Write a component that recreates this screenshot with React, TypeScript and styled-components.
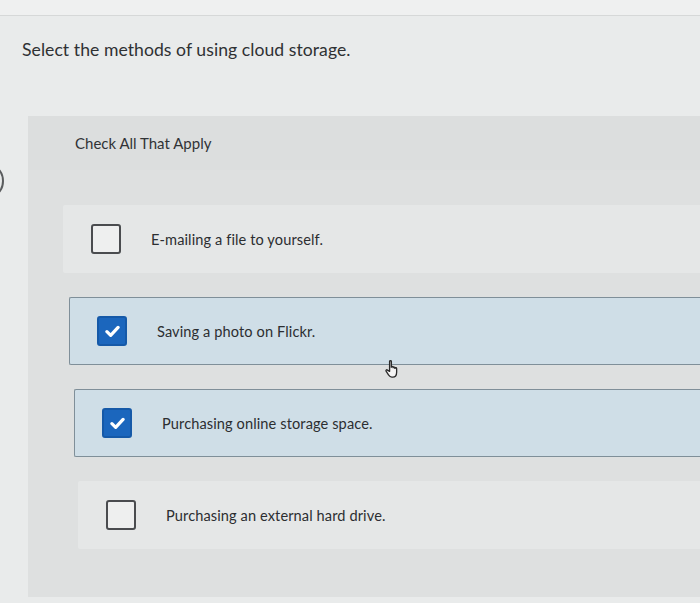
import React from "react";
import styled, { createGlobalStyle } from "styled-components";

const Global = createGlobalStyle`
  html, body { margin: 0; padding: 0; }
  body {
    background: #e9ebeb;
    font-family: Lato, "Open Sans", "Liberation Sans", sans-serif;
    color: #2e3032;
    overflow: hidden;
  }
`;

const Page = styled.div`
  position: relative;
  width: 700px;
  height: 603px;
  overflow: hidden;
  display: flex;
  flex-direction: column;
  background: #e9ebeb;
`;

const TopBar = styled.div`
  height: 15px;
  flex: none;
  background: #eff0f0;
  border-bottom: 1px solid #d6d8d8;
`;

const Title = styled.h1`
  margin: 24px 0 0 22px;
  font-size: 17.6px;
  font-weight: 400;
  line-height: 20px;
  color: #2f3133;
  letter-spacing: 0.05px;
`;

const Panel = styled.section`
  margin: 56px 0 0 28px;
  height: 481px;
  flex: none;
  background: #dee0e0;
  display: flex;
  flex-direction: column;
`;

const PanelHeader = styled.div`
  height: 54px;
  display: flex;
  align-items: center;
  padding-left: 47px;
  font-size: 15px;
  color: #313336;
  background: #dcdede;
`;

const List = styled.ul`
  list-style: none;
  margin: 35px 0 0 0;
  padding: 0;
  display: flex;
  flex-direction: column;
  gap: 24px;
`;

const Item = styled.li<{ $checked: boolean }>`
  height: 68px;
  display: flex;
  align-items: center;
  padding-left: 27px;
  box-sizing: border-box;
  background: ${(p) => (p.$checked ? "#cfdee7" : "#e5e7e7")};
  border: ${(p) => (p.$checked ? "1px solid #7f8f99" : "1px solid transparent")};
  border-right: none;
  border-radius: 2px 0 0 2px;
`;

const Box = styled.span<{ $checked: boolean }>`
  width: 30px;
  height: 30px;
  flex: none;
  box-sizing: border-box;
  border-radius: 3px;
  display: flex;
  align-items: center;
  justify-content: center;
  border: 2px solid ${(p) => (p.$checked ? "#1559a8" : "#4a4c4f")};
  background: ${(p) => (p.$checked ? "#1b66bd" : "#eeefef")};
`;

const Label = styled.span`
  margin-left: 30px;
  font-size: 14.6px;
  color: #2c2e31;
  letter-spacing: 0.1px;
`;

const EdgeMark = styled.div`
  position: absolute;
  left: -18px;
  top: 166px;
  width: 22px;
  height: 30px;
  border-radius: 50%;
  border: 2px solid #5a5c5e;
  box-sizing: border-box;
`;

const Cursor = styled.svg`
  position: absolute;
  left: 384px;
  top: 359px;
`;

const Check = () => (
  <svg width="15" height="13" viewBox="0 0 14 12">
    <path d="M1.8 6.2 L5.3 9.6 L12.2 2.2" fill="none" stroke="#fff" strokeWidth="3" strokeLinecap="round" strokeLinejoin="round" />
  </svg>
);

const options = [
  { text: "E-mailing a file to yourself.", checked: false, shift: 35 },
  { text: "Saving a photo on Flickr.", checked: true, shift: 41 },
  { text: "Purchasing online storage space.", checked: true, shift: 46 },
  { text: "Purchasing an external hard drive.", checked: false, shift: 50 },
];

export default function App() {
  return (
    <>
      <Global />
      <Page>
        <TopBar />
        <Title>Select the methods of using cloud storage.</Title>
        <Panel>
          <PanelHeader>Check All That Apply</PanelHeader>
          <List>
            {options.map((o) => (
              <Item key={o.text} $checked={o.checked} style={{ marginLeft: o.shift }}>
                <Box $checked={o.checked}>{o.checked && <Check />}</Box>
                <Label>{o.text}</Label>
              </Item>
            ))}
          </List>
        </Panel>
        <EdgeMark />
        <Cursor width="20" height="22" viewBox="0 0 18 20">
          <path
            d="M5 2.2c0-.9 1.6-.9 1.6 0V8 M6.6 7.5c0-.9 1.6-.9 1.6 0v1 M8.2 8c0-.9 1.6-.9 1.6 0v1 M9.8 8.6c0-.9 1.6-.9 1.6 0v3.4c0 2.6-1.4 4.4-3.6 4.4H7c-1.4 0-2.2-.8-3-2l-2.2-3.4c-.5-.8.5-1.6 1.2-.9L5 11.2V2.2"
            fill="#f4f4f4"
            stroke="#2a2a2a"
            strokeWidth="1.2"
            strokeLinejoin="round"
          />
        </Cursor>
      </Page>
    </>
  );
}
